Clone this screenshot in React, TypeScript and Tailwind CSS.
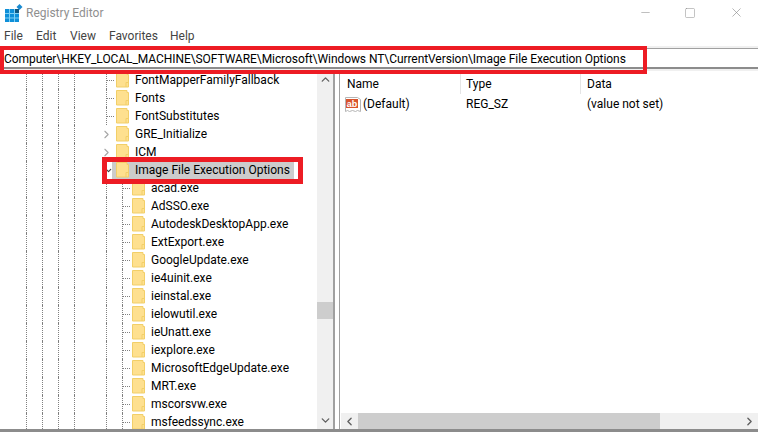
import { Minus, Square, X, ChevronRight, ChevronDown, ChevronUp, ChevronLeft } from "lucide-react"

function RegIcon() {
  return (
    <svg width="20" height="20" viewBox="0 0 20 20">
      <rect x="1" y="6" width="14" height="13" fill="#0f8fd8" />
      <path d="M5.5 6v13M10.5 6v13M1 10.5h14M1 15h14" stroke="#7fd0f5" strokeWidth="1" />
      <rect x="11" y="6" width="4" height="4" fill="#11577f" />
      <path d="M15.5 1l3 3-3 3-3-3z" fill="#1a8ad0" />
    </svg>
  )
}

function Folder() {
  return (
    <svg width="13" height="16" viewBox="0 0 13 16" className="shrink-0">
      <path d="M.5.5h10.5v2h1.5v12.5H.5z" fill="#fee08f" stroke="#f2cf68" />
      <path d="M10 15V10.5h2.5" fill="none" stroke="#f2cf68" />
    </svg>
  )
}

function AbIcon() {
  return (
    <svg width="16" height="17" viewBox="0 0 16 17">
      <path d="M.5 1.5h12l3 2v12l-3-1-2 1-3-1-3 1-2-1-2 1z" fill="#fff" stroke="#b5b5b5" />
      <rect x="1" y="3" width="12" height="9" fill="#d9532c" />
      <text x="7" y="10.5" fontSize="9" fontWeight="700" fill="#fff" textAnchor="middle" fontFamily="Liberation Sans">ab</text>
    </svg>
  )
}

const guides = (
  <>
    <span className="w-4 h-full border-l border-dotted border-[#808080]" />
    <span className="w-4 h-full border-l border-dotted border-[#808080]" />
    <span className="w-4 h-full border-l border-dotted border-[#808080]" />
    <span className="w-4 h-full border-l border-dotted border-[#808080]" />
    <span className="w-4 h-full" />
  </>
)

function Parent({ label, arrow }: { label: string; arrow?: "right" | "down" }) {
  return (
    <div className="flex items-center h-[18px] pl-[26px]">
      {guides}
      <span className="w-[10px] h-full flex items-center shrink-0 relative">
        {arrow === "right" && <ChevronRight size={13} strokeWidth={2} color="#a6a6a6" className="-ml-[6px]" />}
        {arrow === "down" && <ChevronDown size={9} strokeWidth={3} color="#404040" className="-ml-[2px]" />}
        {!arrow && <span className="w-full h-full flex items-center border-l border-dotted border-[#808080]"><span className="w-[7px] border-t border-dotted border-[#808080]" /></span>}
      </span>
      {arrow === "down" ? (
        <span className="flex items-center h-full bg-[#cccccc] -ml-[4px] pl-[4px] pr-[4px]">
          <Folder />
          <span className="ml-[6px] text-black">{label}</span>
        </span>
      ) : (
        <>
          <Folder />
          <span className="ml-[6px] text-black">{label}</span>
        </>
      )}
    </div>
  )
}

function Child({ label }: { label: string }) {
  return (
    <div className="flex items-center h-[18px] pl-[26px]">
      {guides}
      <span className="w-4 h-full border-l border-dotted border-[#808080]" />
      <span className="w-[10px] h-full flex items-center shrink-0 border-l border-dotted border-[#808080]">
        <span className="w-[7px] border-t border-dotted border-[#808080]" />
      </span>
      <Folder />
      <span className="ml-[6px] text-black">{label}</span>
    </div>
  )
}

const children = [
  "acad.exe",
  "AdSSO.exe",
  "AutodeskDesktopApp.exe",
  "ExtExport.exe",
  "GoogleUpdate.exe",
  "ie4uinit.exe",
  "ieinstal.exe",
  "ielowutil.exe",
  "ieUnatt.exe",
  "iexplore.exe",
  "MicrosoftEdgeUpdate.exe",
  "MRT.exe",
  "mscorsvw.exe",
  "msfeedssync.exe",
]

export default function App() {
  return (
    <div className="relative w-[758px] h-[432px] overflow-hidden bg-white text-[12px] flex flex-col font-['Roboto',sans-serif]">
      {/* title bar */}
      <div className="h-[25px] flex items-center shrink-0">
        <span className="ml-[4px]"><RegIcon /></span>
        <span className="ml-[2px] text-[#8f8f8f]">Registry Editor</span>
        <div className="ml-auto flex items-center">
          <Minus size={13} strokeWidth={1} color="#888888" className="mr-[32px]" />
          <Square size={12} strokeWidth={1} color="#888888" className="mr-[33px]" />
          <X size={15} strokeWidth={1} color="#888888" className="mr-[14px]" />
        </div>
      </div>
      {/* menu */}
      <div className="h-[21px] flex items-center pl-[4px] text-[#444444] shrink-0">
        <span className="w-[32px]">File</span>
        <span className="w-[34px]">Edit</span>
        <span className="w-[39px]">View</span>
        <span className="w-[61px]">Favorites</span>
        <span>Help</span>
      </div>
      {/* address bar */}
      <div className="h-[25px] shrink-0 bg-[#f0f0f0] pt-[2px]">
        <div className="h-[21px] bg-white border-t border-[#a0a0a0] border-b-2 border-b-[#8c8c8c] flex items-center pl-[4px] pt-[1px] text-black whitespace-nowrap tracking-[-0.07px]">
          Computer\HKEY_LOCAL_MACHINE\SOFTWARE\Microsoft\Windows NT\CurrentVersion\Image File Execution Options
        </div>
      </div>
      {/* panes */}
      <div className="flex-1 min-h-0 flex">
        <div className="w-[317px] overflow-hidden">
          <Parent label="FontMapperFamilyFallback" />
          <Parent label="Fonts" />
          <Parent label="FontSubstitutes" />
          <Parent label="GRE_Initialize" arrow="right" />
          <Parent label="ICM" arrow="right" />
          <Parent label="Image File Execution Options" arrow="down" />
          {children.map(c => <Child key={c} label={c} />)}
        </div>
        <div className="w-[16px] bg-[#f0f0f0] flex flex-col items-center justify-between pt-[2px] pb-[2px] shrink-0 relative">
          <ChevronUp size={13} strokeWidth={2.5} color="#606060" />
          <span className="absolute top-[231px] left-0 w-full h-[17px] bg-[#cdcdcd]" />
          <ChevronDown size={13} strokeWidth={2.5} color="#606060" />
        </div>
        <div className="w-[2px] bg-[#a0a0a0] shrink-0" />
        <div className="flex-1 ml-[4px] border-l border-[#a0a0a0] pl-[7px] relative">
          <div className="flex h-[23px] pt-[2px] items-center text-black">
            <span className="w-[114px] h-full flex items-center border-r border-[#e5e5e5]">Name</span>
            <span className="w-[120px] pl-[5px] h-full flex items-center border-r border-[#e5e5e5]">Type</span>
            <span className="pl-[6px]">Data</span>
          </div>
          <div className="flex h-[20px] items-center text-black">
            <span className="w-[114px] flex items-center gap-[2px] -ml-[2px] mr-[2px]"><AbIcon />(Default)</span>
            <span className="w-[120px] pl-[5px]">REG_SZ</span>
            <span className="pl-[6px]">(value not set)</span>
          </div>
          <div className="absolute left-[1px] right-0 bottom-0 h-[16px] bg-[#f0f0f0] flex items-center pl-[2px]">
            <ChevronLeft size={13} strokeWidth={2.5} color="#606060" />
            <span className="ml-[2px] w-[302px] h-full bg-[#cdcdcd]" />
            <ChevronRight size={13} strokeWidth={2.5} color="#606060" className="ml-auto mr-[2px]" />
          </div>
        </div>
      </div>
      {/* bottom edge */}
      <div className="h-[3px] shrink-0 bg-[#8c8c8c]" />
      {/* annotations */}
      <div className="absolute left-0 top-[46px] w-[647px] h-[28px] border-[4px] border-[#ed1c24]" />
      <div className="absolute left-[102px] top-[157px] w-[201px] h-[27px] border-[5px] border-[#ed1c24]" />
    </div>
  )
}
